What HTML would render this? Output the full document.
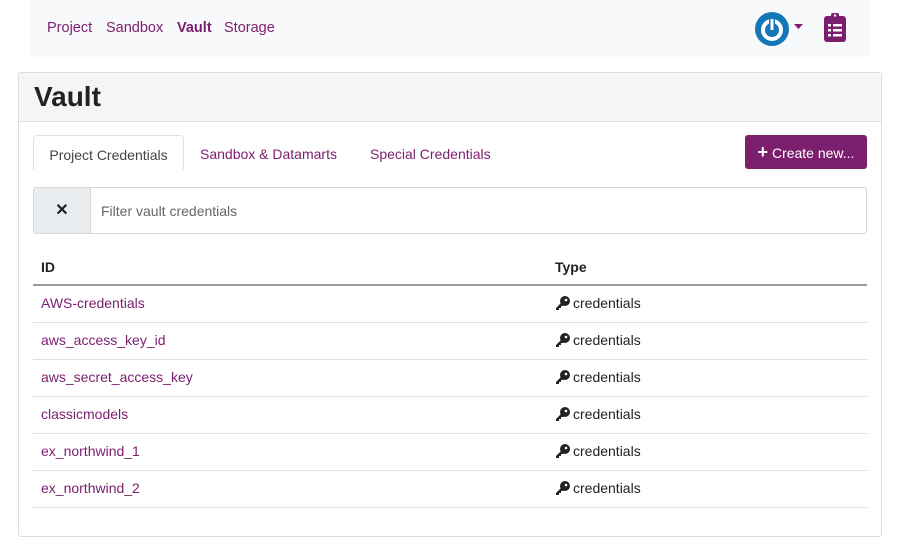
<!DOCTYPE html>
<html><head><style>
body{margin:0;background:#fff;font-family:"Liberation Sans",sans-serif;width:900px;height:551px;overflow:hidden;position:relative}
.nav{position:absolute;left:30px;top:0;width:840px;height:57px;background:#f8f9fa}
.nav a{position:absolute;top:20px;font-size:14.5px;color:#7b1e6e;text-decoration:none}
.card{position:absolute;left:18px;top:72px;width:862px;height:463px;border:1px solid #dcdcdc;border-radius:3px}
.ch{height:48px;background:#f5f5f5;border-bottom:1px solid #e2e2e2}
.ch h1{margin:0;position:absolute;left:15px;top:8px;font-size:28px;color:#222}
.tab{position:absolute;top:136px;font-size:14px;color:#7b1e6e}
.t1{left:33px;top:135px;width:151px;height:35px;border:1px solid #dee2e6;border-bottom:none;border-radius:4px 4px 0 0;background:#fff;color:#444;box-sizing:border-box;padding-top:11px;text-align:center}
.btn{position:absolute;left:745px;top:135px;width:122px;height:34px;background:#7b1e6e;border-radius:3px;color:#fff;font-size:14px;line-height:34px;text-align:center}
.filter{position:absolute;left:33px;top:187px;width:832px;height:45px;border:1px solid #d8d8d8;border-radius:3px}
.fx{position:absolute;left:0;top:0;width:56px;height:45px;background:#e9ecef;border-right:1px solid #d8d8d8;text-align:center;line-height:45px;font-weight:bold;font-size:16px;color:#222}
.fp{position:absolute;left:67px;top:15px;font-size:14px;color:#666}
.th{position:absolute;top:259px;font-size:14px;font-weight:bold;color:#222}
.hl{position:absolute;left:33px;top:284px;width:834px;height:2px;background:#999}
.row{position:absolute;left:33px;width:834px;height:36px;border-bottom:1px solid #e0e0e0;font-size:14px}
.row .id{position:absolute;left:8px;top:9px;color:#7b1e6e}
.row .ty{position:absolute;left:540px;top:9px;color:#222}
.row svg{position:absolute;left:522px;top:10px}
</style></head><body>
<div class="nav">
<a style="left:17px">Project</a><a style="left:76px">Sandbox</a><a style="left:147px;font-weight:bold">Vault</a><a style="left:194px">Storage</a>
<svg style="position:absolute;left:724px;top:11px" width="36" height="36"><circle cx="18" cy="18" r="17" fill="#1377b8"/><circle cx="18" cy="19" r="9" fill="none" stroke="#fff" stroke-width="4"/><rect x="15" y="5" width="6" height="14" fill="#1377b8"/><rect x="16.5" y="8" width="3" height="11" fill="#fff"/></svg>
<svg style="position:absolute;left:764px;top:24px" width="9" height="6"><path d="M0 0h9L4.5 5z" fill="#7b1e6e"/></svg>
<svg style="position:absolute;left:793px;top:12px" width="24" height="30"><rect x="1" y="4" width="22" height="26" rx="3" fill="#7b1e6e"/><rect x="8" y="1" width="8" height="6" rx="2" fill="#7b1e6e"/><circle cx="12" cy="3.5" r="1.2" fill="#fff"/><g fill="#fff"><rect x="5" y="12" width="3" height="2.5"/><rect x="10" y="12" width="9" height="2.5"/><rect x="5" y="17" width="3" height="2.5"/><rect x="10" y="17" width="9" height="2.5"/><rect x="5" y="22" width="3" height="2.5"/><rect x="10" y="22" width="9" height="2.5"/></g></svg>
</div>
<div class="card"><div class="ch"><h1>Vault</h1></div></div>
<div class="tab t1">Project Credentials</div>
<div class="tab" style="left:200px;top:146px">Sandbox &amp; Datamarts</div>
<div class="tab" style="left:370px;top:146px">Special Credentials</div>
<div class="btn"><b style="font-size:18px">+</b> Create new...</div>
<div class="filter"><div class="fx">✕</div><div class="fp">Filter vault credentials</div></div>
<div class="th" style="left:41px">ID</div><div class="th" style="left:555px">Type</div>
<div class="hl"></div>
<svg width="0" height="0" style="position:absolute"><defs><g id="k"><circle cx="10" cy="5" r="5" fill="#222"/><circle cx="11" cy="4" r="1.3" fill="#fff"/><path d="M7 6L1 12v2h3v-2h2v-2h2l1-2z" fill="#222"/></g></defs></svg>
<div class="row" style="top:286px"><span class="id">AWS-credentials</span><svg width="15" height="15"><use href="#k"/></svg><span class="ty">credentials</span></div>
<div class="row" style="top:323px"><span class="id">aws_access_key_id</span><svg width="15" height="15"><use href="#k"/></svg><span class="ty">credentials</span></div>
<div class="row" style="top:360px"><span class="id">aws_secret_access_key</span><svg width="15" height="15"><use href="#k"/></svg><span class="ty">credentials</span></div>
<div class="row" style="top:397px"><span class="id">classicmodels</span><svg width="15" height="15"><use href="#k"/></svg><span class="ty">credentials</span></div>
<div class="row" style="top:434px"><span class="id">ex_northwind_1</span><svg width="15" height="15"><use href="#k"/></svg><span class="ty">credentials</span></div>
<div class="row" style="top:471px"><span class="id">ex_northwind_2</span><svg width="15" height="15"><use href="#k"/></svg><span class="ty">credentials</span></div>
</body></html>
